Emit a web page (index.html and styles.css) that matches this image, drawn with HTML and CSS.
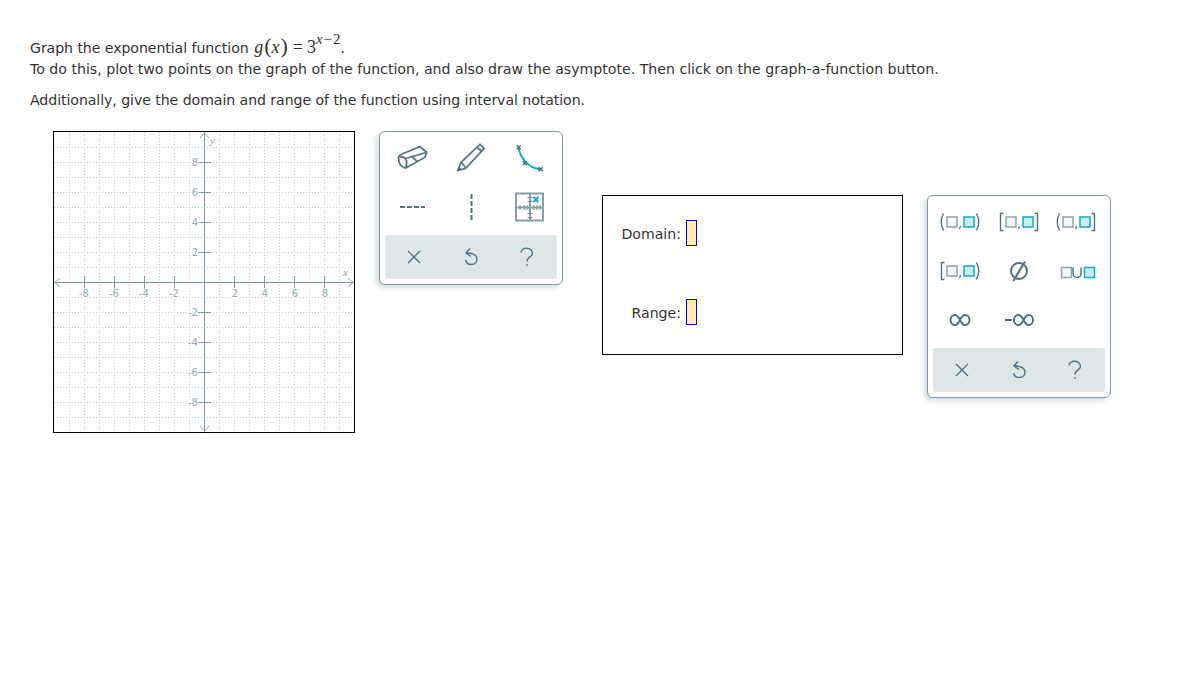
FILE: index.html
```html
<!DOCTYPE html>
<html lang="en">
<head>
  <meta charset="UTF-8" />
  <title>Graph the exponential function</title>
  <link rel="stylesheet" href="styles.css">
</head>
<body>
  <svg class="icon-defs">
    <defs>
      <g id="ic-close"><path d="M-6 -6L6 6M6 -6L-6 6" /></g>
      <g id="ic-undo"><path d="M-1 -8.500L-5 -4L0 -0.500M-5 -4C1 -4.500 6 -2 6 2C6 5.500 3.500 7.500 0.500 7.500C-2.500 7.500 -5 5.500 -5.500 3" /></g>
      <g id="ic-help"><path d="M-7 -4.500C-7 -7 -4.500 -8.700 -1.500 -8.700C2 -8.700 4.500 -6.500 4.500 -3.500C4.500 0 -1 0 -1 4.500" /><path d="M-1 7V8.700" /></g>
      <g id="ic-pair">
        <rect class="box-grey" x="-13" y="-5" width="10" height="10" />
        <rect class="box-teal" x="4" y="-5" width="10" height="10" />
        <path class="comma" d="M0.500 4L-0.500 7" />
      </g>
      <path id="ic-lparen" d="M-16.500 -8.500Q-21 0 -16.500 8.500" />
      <path id="ic-rparen" d="M16.500 -8.500Q21 0 16.500 8.500" />
      <path id="ic-lbrack" d="M-15.500 -8.500H-18.500V8.500H-15.500" />
      <path id="ic-rbrack" d="M15.500 -8.500H18.500V8.500H15.500" />
      <path id="ic-inf" d="M0 0C-1.500 -3 -3 -5 -5 -5C-8 -5 -9.500 -2.500 -9.500 0C-9.500 2.500 -8 5 -5 5C-3 5 -1.500 3 0 0C1.500 -3 3 -5 5 -5C8 -5 9.500 -2.500 9.500 0C9.500 2.500 8 5 5 5C3 5 1.500 3 0 0Z" />
    </defs>
  </svg>

  <div class="question">
    <p><span class="tight">Graph the exponential function</span> <span class="math"><i>g</i><span class="paren">(</span><i>x</i><span class="paren">)</span><span class="eq">=</span>3<sup><i>x</i><span class="minus">−</span>2</sup></span>.<br>
    To do this, plot two points on the graph of the function, and also draw the asymptote. Then click on the graph-a-function button.</p>
    <p class="tight">Additionally, give the domain and range of the function using interval notation.</p>
  </div>

  <div class="work-row">
    <div class="graph-box">
      <svg class="graph" width="300" height="300" viewBox="0 0 300 300">
        <path class="grid" d="M15.500 0V300M30.500 0V300M45.500 0V300M60.500 0V300M75.500 0V300M90.500 0V300M105.500 0V300M120.500 0V300M135.500 0V300M165.500 0V300M180.500 0V300M195.500 0V300M210.500 0V300M225.500 0V300M240.500 0V300M255.500 0V300M270.500 0V300M285.500 0V300M0 15.500H300M0 30.500H300M0 45.500H300M0 60.500H300M0 75.500H300M0 90.500H300M0 105.500H300M0 120.500H300M0 135.500H300M0 165.500H300M0 180.500H300M0 195.500H300M0 210.500H300M0 225.500H300M0 240.500H300M0 255.500H300M0 270.500H300M0 285.500H300" />
        <path class="axis" d="M0 150.500H300M150.500 0V300" />
        <path class="axis" d="M30.500 144V157M60.500 144V157M90.500 144V157M120.500 144V157M180.500 144V157M210.500 144V157M240.500 144V157M270.500 144V157M144 30.500H157M144 60.500H157M144 90.500H157M144 120.500H157M144 180.500H157M144 210.500H157M144 240.500H157M144 270.500H157" />
        <path class="axis-thin" d="M6 146L1 150.500L6 155M294 146L299 150.500L294 155M146 6L150.500 1L155 6M146 294L150.500 299L155 294" />
        <g class="tick-label">
          <text x="30" y="165">-8</text><text x="60" y="165">-6</text><text x="90" y="165">-4</text><text x="120" y="165">-2</text>
          <text x="181" y="165">2</text><text x="211" y="165">4</text><text x="241" y="165">6</text><text x="271" y="165">8</text>
          <text x="141" y="34">8</text><text x="141" y="64">6</text><text x="141" y="94">4</text><text x="141" y="124">2</text>
          <text x="139" y="184">-2</text><text x="139" y="214">-4</text><text x="139" y="244">-6</text><text x="139" y="274">-8</text>
        </g>
        <text class="axis-name" x="156" y="12">y</text>
        <text class="axis-name" x="289" y="144">x</text>
      </svg>
    </div>

    <div class="tool-panel graph-tools">
      <div class="tool-grid">
        <div class="tool"><svg width="40" height="40" viewBox="0 0 40 40">
          <path class="ink-icon" d="M6.500 20C7 18.500 8.500 17.500 10 17L28 9.700L34.700 15.300L33 20.300L13.700 31C11 31 8 28 7 25Z" />
          <path class="ink-icon" d="M7 19.500C9 19.500 12 20 13.800 21.500L34.700 15.300M13.800 21.500C15 24.500 14.800 28 13.700 31M19 19L25.500 24.500" />
        </svg></div>
        <div class="tool"><svg width="40" height="40" viewBox="0 0 40 40">
          <path class="ink-icon" d="M10 25.300L29 7.300L33.300 11.300L14.700 31.300L6.700 33.700ZM26 10L30.500 14.500M10 25.300C11.500 27 13.500 28 14.700 31.300" />
          <path class="fill-ink" d="M6.700 33.700L8 29.500L11 32.500Z" />
        </svg></div>
        <div class="tool"><svg width="40" height="40" viewBox="0 0 40 40">
          <g transform="translate(-1.300 0)">
            <path class="teal" d="M12 10.300C13 19 20 31 34 32.300" />
            <path class="mark" d="M10 8.300L14 12.300M14 8.300L10 12.300M16 24.300L20 28.300M20 24.300L16 28.300M32 30.300L36 34.300M36 30.300L32 34.300" />
          </g>
        </svg></div>
        <div class="tool"><svg width="40" height="40" viewBox="0 0 40 40">
          <path class="dashed" d="M8 20H33" />
        </svg></div>
        <div class="tool"><svg width="40" height="40" viewBox="0 0 40 40">
          <path class="dashed" d="M20.500 7V33" />
        </svg></div>
        <div class="tool"><svg width="40" height="40" viewBox="0 0 40 40">
          <g transform="translate(1.500 0)">
            <rect class="grid-icon" x="6.500" y="6.500" width="27" height="27" />
            <path class="grid-icon" d="M6.500 20.500H33.500M20.500 6.500V33.500" />
            <path class="grid-tick" d="M10.500 18V23M14.500 18V23M17.500 18V23M24.500 18V23M27.500 18V23M30.500 18V23M18 10.500H23M18 14.500H23M18 26.500H23M18 30.500H23" />
            <path class="teal" d="M24 10L29 15M29 10L24 15" />
          </g>
        </svg></div>
      </div>
      <div class="tool-bar">
        <div class="tool"><svg width="40" height="40" viewBox="-20 -20 40 40"><use class="ink" href="#ic-close" /></svg></div>
        <div class="tool"><svg width="40" height="40" viewBox="-20 -20 40 40"><use class="ink" href="#ic-undo" /></svg></div>
        <div class="tool"><svg width="40" height="40" viewBox="-20 -20 40 40"><use class="ink" href="#ic-help" /></svg></div>
      </div>
    </div>

    <div class="answer-box">
      <label class="answer-label">Domain:</label>
      <span class="answer-input"></span>
      <label class="answer-label">Range:</label>
      <span class="answer-input"></span>
    </div>

    <div class="tool-panel interval-tools">
      <div class="tool-grid">
        <div class="tool"><svg width="48" height="24" viewBox="-24 -12 48 24"><use class="ink" href="#ic-lparen" /><use href="#ic-pair" /><use class="ink" href="#ic-rparen" /></svg></div>
        <div class="tool"><svg width="48" height="24" viewBox="-24 -12 48 24"><use class="ink" href="#ic-lbrack" /><use href="#ic-pair" /><use class="ink" href="#ic-rbrack" /></svg></div>
        <div class="tool"><svg width="48" height="24" viewBox="-24 -12 48 24"><use class="ink" href="#ic-lparen" /><use href="#ic-pair" /><use class="ink" href="#ic-rbrack" /></svg></div>
        <div class="tool"><svg width="48" height="24" viewBox="-24 -12 48 24"><use class="ink" href="#ic-lbrack" /><use href="#ic-pair" /><use class="ink" href="#ic-rparen" /></svg></div>
        <div class="tool"><svg width="24" height="24" viewBox="-12 -12 24 24">
          <circle class="ink-bold" r="8" />
          <path class="ink-bold" d="M6 -9.500L-5.700 10" />
        </svg></div>
        <div class="tool"><svg width="48" height="24" viewBox="-24 -12 48 24">
          <rect class="box-grey" x="-14.500" y="-3.500" width="10" height="10" />
          <path class="ink" d="M-3 -3.500V2C-3 5 -1 6.500 1 6.500C3 6.500 5 5 5 2V-3.500" />
          <rect class="box-teal" x="8.500" y="-3.500" width="10" height="10" />
        </svg></div>
        <div class="tool"><svg width="48" height="24" viewBox="-24 -12 48 24"><use class="ink-bold" href="#ic-inf" /></svg></div>
        <div class="tool"><svg width="48" height="24" viewBox="-24 -12 48 24">
          <path class="ink-bold" d="M-14 0H-7" />
          <use class="ink-bold" href="#ic-inf" transform="translate(4.500 0)" />
        </svg></div>
        <div class="tool"></div>
      </div>
      <div class="tool-bar">
        <div class="tool"><svg width="40" height="40" viewBox="-20 -20 40 40"><use class="ink" href="#ic-close" /></svg></div>
        <div class="tool"><svg width="40" height="40" viewBox="-20 -20 40 40"><use class="ink" href="#ic-undo" /></svg></div>
        <div class="tool"><svg width="40" height="40" viewBox="-20 -20 40 40"><use class="ink" href="#ic-help" /></svg></div>
      </div>
    </div>
  </div>
</body>
</html>
```

FILE: styles.css
```css
* { box-sizing: border-box; }
body {
  margin: 0;
  background: #fff;
  color: #333;
  font-family: "DejaVu Sans", Verdana, sans-serif;
  font-size: 14.13px;
}
.icon-defs {
  display: none;
}
.question {
  padding: 38px 0 0 30px;
}
.question p {
  margin: 0 0 10px;
  line-height: 21px;
}
.tight {
  letter-spacing: -0.07px;
}
.math {
  font-family: "Liberation Serif", serif;
  font-size: 18px;
  line-height: 0;
  margin-left: 1px;
}
.math .paren {
  font-size: 22px;
  margin-left: 1px;
}
.math .eq {
  margin: 0 4px 0 5px;
}
.math sup {
  font-size: 15px;
  line-height: 0;
  vertical-align: 9px;
}
.math .minus {
  margin: 0 1px;
}
.work-row {
  display: flex;
  align-items: flex-start;
  margin-top: 20px;
  padding-left: 53px;
}
.graph-box {
  width: 302px;
  height: 302px;
  border: 1px solid #000;
}
.graph {
  display: block;
}
.grid {
  fill: none;
  stroke: #bccbcf;
  stroke-width: 1;
  stroke-dasharray: 1 2;
}
.axis {
  fill: none;
  stroke: #7f9ca3;
  stroke-width: 1;
}
.axis-thin {
  fill: none;
  stroke: #8ea7ad;
  stroke-width: 1;
}
.tick-label text {
  font-family: "DejaVu Sans", sans-serif;
  font-size: 10px;
  fill: #94aab0;
  text-anchor: middle;
  stroke: #fff;
  stroke-width: 2px;
  paint-order: stroke;
}
.axis-name {
  font-family: "Liberation Serif", serif;
  font-style: italic;
  font-size: 11px;
  fill: #8ea7ad;
}

.tool-panel {
  width: 184px;
  background: #fff;
  border: 1px solid #7f9ca3;
  border-radius: 6px;
  box-shadow: -3px 3px 5px rgba(90, 120, 130, 0.25);
  padding: 0 5px 5px;
}
.graph-tools {
  margin-left: 24px;
  height: 154px;
}
.interval-tools {
  margin-left: 24px;
  margin-top: 64px;
  height: 203px;
}
.tool-grid {
  display: grid;
  grid-template-columns: repeat(3, 1fr);
}
.tool-grid .tool:nth-child(3n+1) svg {
  margin-left: -3px;
}
.graph-tools .tool-grid {
  grid-auto-rows: 50px;
  margin-bottom: 3px;
}
.interval-tools .tool-grid {
  grid-auto-rows: 49px;
  padding-top: 1px;
  margin-bottom: 4px;
}
.tool {
  display: flex;
  align-items: center;
  justify-content: center;
}
.tool-bar {
  display: grid;
  grid-template-columns: repeat(3, 1fr);
  height: 44px;
  background: #dfe6e8;
  border-radius: 3px;
}
.ink {
  fill: none;
  stroke: #4d7380;
  stroke-width: 1.4;
}
.ink-icon {
  fill: none;
  stroke: #567a86;
  stroke-width: 1.8;
  stroke-linejoin: round;
}
.ink-bold {
  fill: none;
  stroke: #4d7380;
  stroke-width: 2;
}
.fill-ink {
  fill: #4d7380;
}
.teal {
  fill: none;
  stroke: #12aac6;
  stroke-width: 2;
}
.mark {
  fill: none;
  stroke: #4d7380;
  stroke-width: 1.6;
}
.dashed {
  fill: none;
  stroke: #4d7380;
  stroke-width: 2;
  stroke-dasharray: 5 2;
}
.grid-icon {
  fill: none;
  stroke: #86a0a7;
  stroke-width: 2;
}
.grid-tick {
  fill: none;
  stroke: #6f8f98;
  stroke-width: 1;
}
.box-grey {
  fill: #f3f6f7;
  stroke: #8fa5ab;
  stroke-width: 1.5;
}
.box-teal {
  fill: #c9eef2;
  stroke: #12aac6;
  stroke-width: 1.5;
}
.comma {
  fill: none;
  stroke: #4d7380;
  stroke-width: 1.2;
}

.answer-box {
  display: grid;
  grid-template-columns: 78px 11px;
  grid-auto-rows: 26px;
  column-gap: 5px;
  row-gap: 53px;
  align-items: center;
  width: 301px;
  height: 160px;
  margin-left: 39px;
  margin-top: 64px;
  padding-top: 24px;
  border: 1px solid #000;
}
.answer-label {
  padding-top: 1px;
  text-align: right;
}
.answer-input {
  height: 26px;
  background: #fdebb0;
  border: 1px solid #0000e6;
}
```
